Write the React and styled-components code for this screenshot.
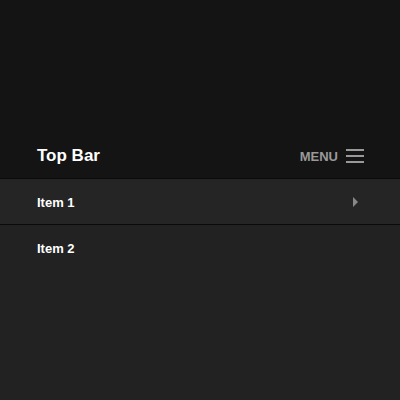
import styled, { createGlobalStyle } from 'styled-components'

const Global = createGlobalStyle`
  html, body {
    margin: 0;
    padding: 0;
    background: #222222;
    font-family: "Liberation Sans", Arial, sans-serif;
  }
`

const Page = styled.div`
  width: 400px;
  height: 400px;
  display: flex;
  flex-direction: column;
  background: #222222;
`

const Header = styled.header`
  height: 178px;
  background: #141414;
  display: flex;
  flex-direction: column;
  justify-content: flex-end;
  border-bottom: 1px solid #0a0a0a;
`

const Bar = styled.div`
  height: 45px;
  padding: 1px 36px 0 37px;
  box-sizing: border-box;
  display: flex;
  align-items: center;
  justify-content: space-between;
`

const Title = styled.h1`
  margin: 0;
  color: #ffffff;
  font-size: 17px;
  font-weight: bold;
`

const MenuToggle = styled.div`
  display: flex;
  align-items: center;
  gap: 8px;
  color: #999999;
  font-size: 13px;
  font-weight: bold;
`

const Burger = styled.span`
  display: flex;
  flex-direction: column;
  gap: 4px;
  width: 18px;
  span {
    height: 2px;
    background: #999999;
  }
`

const List = styled.ul`
  list-style: none;
  margin: 0;
  padding: 0;
`

const Item = styled.li`
  height: 44px;
  padding: 1px 42px 0 37px;
  display: flex;
  align-items: center;
  justify-content: space-between;
  background: ${p => (p.$active ? '#252525' : 'transparent')};
  border-bottom: ${p => (p.$active ? '1px solid #0a0a0a' : 'none')};
  color: #ffffff;
  font-size: 13px;
  font-weight: bold;
`

const Arrow = styled.span`
  width: 0;
  height: 0;
  border-top: 5px solid transparent;
  border-bottom: 5px solid transparent;
  border-left: 5px solid #888888;
`

export default function App() {
  return (
    <>
      <Global />
      <Page>
        <Header>
          <Bar>
            <Title>Top Bar</Title>
            <MenuToggle>
              MENU
              <Burger><span /><span /><span /></Burger>
            </MenuToggle>
          </Bar>
        </Header>
        <List>
          <Item $active>
            Item 1
            <Arrow />
          </Item>
          <Item>Item 2</Item>
        </List>
      </Page>
    </>
  )
}
